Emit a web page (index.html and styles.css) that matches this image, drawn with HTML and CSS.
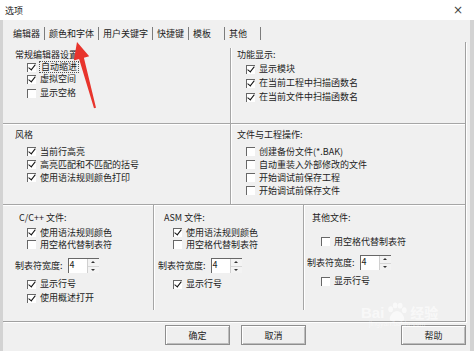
FILE: index.html
```html
<!DOCTYPE html>
<html lang="zh-CN">
<head>
    <meta charset="UTF-8">
    <meta name="viewport" content="width=device-width, initial-scale=1.0">
    <title>选项</title>
    <link rel="stylesheet" href="styles.css">
</head>
<body>
<div class="window">
    <div class="titlebar">
        <span class="title">选项</span>
        <span class="close">×</span>
    </div>

    <div class="dialog">
        <div class="tabs">
            <span class="tab active">编辑器</span>
            <span class="tab">颜色和字体</span>
            <span class="tab">用户关键字</span>
            <span class="tab">快捷键</span>
            <span class="tab wide">模板</span>
            <span class="tab wide">其他</span>
        </div>

        <div class="panel">
            <div class="row row-top">
                <div class="group half">
                    <div class="legend">常规编辑器设置</div>
                    <label class="check"><span class="box on"></span><span class="focus">自动缩进</span></label>
                    <label class="check"><span class="box on"></span>虚拟空间</label>
                    <label class="check"><span class="box"></span>显示空格</label>
                </div>
                <div class="group side">
                    <div class="legend">功能显示:</div>
                    <label class="check"><span class="box on"></span>显示模块</label>
                    <label class="check"><span class="box on"></span>在当前工程中扫描函数名</label>
                    <label class="check"><span class="box on"></span>在当前文件中扫描函数名</label>
                </div>
            </div>

            <div class="row row-mid">
                <div class="group half">
                    <div class="legend">风格</div>
                    <label class="check"><span class="box on"></span>当前行高亮</label>
                    <label class="check"><span class="box on"></span>高亮匹配和不匹配的括号</label>
                    <label class="check"><span class="box on"></span>使用语法规则颜色打印</label>
                </div>
                <div class="group side">
                    <div class="legend">文件与工程操作:</div>
                    <label class="check"><span class="box"></span>创建备份文件(*.BAK)</label>
                    <label class="check"><span class="box"></span>自动重装入外部修改的文件</label>
                    <label class="check"><span class="box"></span>开始调试前保存工程</label>
                    <label class="check"><span class="box"></span>开始调试前保存文件</label>
                </div>
            </div>

            <div class="row row-bottom">
                <div class="group col c-cpp">
                    <div class="legend">C/C++ 文件:</div>
                    <label class="check tight"><span class="box on"></span>使用语法规则颜色</label>
                    <label class="check tight"><span class="box"></span>用空格代替制表符</label>
                    <div class="tabwidth">
                        <span>制表符宽度:</span>
                        <span class="spin"><span class="val">4</span><span class="arrows"><i class="up"></i><i class="down"></i></span></span>
                    </div>
                    <label class="check after"><span class="box on"></span>显示行号</label>
                    <label class="check"><span class="box on"></span>使用概述打开</label>
                </div>
                <div class="group col c-asm">
                    <div class="legend">ASM 文件:</div>
                    <label class="check tight"><span class="box on"></span>使用语法规则颜色</label>
                    <label class="check tight"><span class="box"></span>用空格代替制表符</label>
                    <div class="tabwidth">
                        <span>制表符宽度:</span>
                        <span class="spin"><span class="val">4</span><span class="arrows"><i class="up"></i><i class="down"></i></span></span>
                    </div>
                    <label class="check after"><span class="box on"></span>显示行号</label>
                </div>
                <div class="group col c-other">
                    <div class="legend">其他文件:</div>
                    <label class="check tight skip"><span class="box"></span>用空格代替制表符</label>
                    <div class="tabwidth">
                        <span>制表符宽度:</span>
                        <span class="spin"><span class="val">4</span><span class="arrows"><i class="up"></i><i class="down"></i></span></span>
                    </div>
                    <label class="check after"><span class="box"></span>显示行号</label>
                </div>
            </div>
        </div>

        <div class="buttons">
            <button class="btn ok">确定</button>
            <button class="btn cancel">取消</button>
            <button class="btn help">帮助</button>
        </div>
    </div>

    <div class="watermark">
        <div class="wm-logo">
            <span class="wm-bai">Bai</span>
            <svg class="paw" viewBox="0 0 24 22" width="22" height="20">
                <ellipse cx="5" cy="8" rx="2.6" ry="3.2"/>
                <ellipse cx="10" cy="3.8" rx="2.6" ry="3.2"/>
                <ellipse cx="15.5" cy="4" rx="2.6" ry="3.2"/>
                <ellipse cx="20" cy="9" rx="2.6" ry="3.2"/>
                <path d="M12 10c-4 0-8 5-8 8.5 0 2.5 2.5 3 4 2.6 1.5-.4 2.6-.8 4-.8s2.5.4 4 .8c1.5.4 4-.1 4-2.6C20 15 16 10 12 10z"/>
            </svg>
            <span class="wm-jy">经验</span>
        </div>
        <div class="wm-url">jingyan.baidu.com</div>
    </div>

    <svg class="arrow" viewBox="0 0 474 351" width="474" height="351">
        <polygon points="77,42 89.2,56.3 83.9,57.7 96,107.7 94,108.3 79.1,59.1 73.8,60.5"/>
    </svg>
</div>
</body>
</html>
```

FILE: styles.css
```css
* {
    box-sizing: border-box;
}

body {
    margin: 0;
    width: 474px;
    height: 351px;
    overflow: hidden;
    font-family: "Noto Sans CJK SC", "Noto Sans", sans-serif;
    font-size: 9px;
    color: #222;
    background-color: #f0f0f0;
}

.window {
    position: relative;
    width: 474px;
    height: 351px;
}

.titlebar {
    height: 20px;
    background-color: #fff;
    display: flex;
    align-items: center;
    justify-content: space-between;
    padding: 0 11px 0 5px;
}

.close {
    font-family: "DejaVu Sans", sans-serif;
    font-size: 12px;
    line-height: 1;
    color: #444;
}

.dialog {
    height: 331px;
    border-left: 3px solid #d3d3d3;
    border-right: 4px solid #d3d3d3;
    background-color: #f0f0f0;
}

/* tab strip */
.tabs {
    height: 22px;
    padding: 4px 0 0 6px;
    display: flex;
    align-items: center;
}

.tab {
    height: 13px;
    line-height: 13px;
    padding: 0 4px;
    border-right: 1px solid #7c7c7c;
}

.tab.wide {
    padding-right: 13px;
}

/* options page */
.panel {
    width: 463px;
    height: 280px;
    border-right: 1px solid #a0a0a0;
    border-bottom: 1px solid #a0a0a0;
    box-shadow: 1px 1px 0 #fff;
}

.row {
    display: flex;
    border-bottom: 1px solid #a6a6a6;
    box-shadow: 0 1px 0 #fff;
}

.row-top {
    height: 82px;
    padding-top: 6px;
}

.row-mid {
    height: 81px;
}

.row-bottom {
    height: 116px;
    border-bottom: none;
    box-shadow: none;
    align-items: flex-start;
}

.group.half {
    width: 228px;
    padding-left: 12px;
    border-right: 1px solid #a6a6a6;
    box-shadow: 1px 0 0 #fff;
}

.group.side {
    flex: 1;
    padding-left: 6px;
}

.row-mid .group {
    padding-top: 4px;
}

.legend {
    line-height: 14px;
}

.check {
    display: flex;
    align-items: center;
    gap: 4px;
    line-height: 14px;
    white-space: nowrap;
}

.half .check {
    margin-left: 12px;
}

.side .check {
    margin-left: 9px;
}

.row-mid .legend {
    margin-bottom: 2.5px;
}

.row-mid .check {
    line-height: 13px;
}

.box {
    position: relative;
    flex: none;
    width: 9px;
    height: 9px;
    background-color: #fff;
    border-top: 1px solid #676767;
    border-left: 1px solid #676767;
}

.box.on::after {
    content: "";
    position: absolute;
    left: 2px;
    top: -1px;
    width: 3px;
    height: 6px;
    border: solid #111;
    border-width: 0 1.7px 1.7px 0;
    transform: rotate(38deg);
}

.focus {
    outline: 1px dotted #555;
    line-height: 10px;
    padding: 0 1px;
}

/* file type columns */
.col {
    height: 105px;
    padding-top: 5.5px;
}

.c-cpp {
    width: 151px;
    padding-left: 12px;
    border-right: 1px solid #a6a6a6;
    box-shadow: 1px 0 0 #fff;
}

.c-asm {
    width: 150px;
    padding-left: 4px;
    border-right: 1px solid #a6a6a6;
    box-shadow: 1px 0 0 #fff;
}

.c-other {
    flex: 1;
    padding-left: 3px;
}

.col .legend {
    line-height: 13px;
    margin-bottom: 3px;
}

.c-cpp .legend { margin-left: 4px; }
.c-asm .legend { margin-left: 6px; }
.c-other .legend { margin-left: 5px; }

.c-cpp .check { margin-left: 12px; }
.c-asm .check { margin-left: 15px; }
.c-other .check { margin-left: 14px; }

.check.tight {
    line-height: 12px;
}

.check.skip {
    margin-top: 12px;
}

.check.after {
    margin-top: 4px;
}

.tabwidth {
    display: flex;
    align-items: center;
    gap: 5px;
    height: 15px;
    margin-top: 7.5px;
}

.spin {
    display: flex;
    width: 31px;
    height: 15px;
    background-color: #fff;
    border-top: 1px solid #676767;
    border-left: 1px solid #676767;
}

.spin .val {
    flex: 1;
    padding-left: 1px;
    line-height: 11px;
}

.spin .arrows {
    width: 12px;
    display: flex;
    flex-direction: column;
    border-left: 1px solid #d0d0d0;
    background-color: #f3f3f3;
}

.spin i {
    flex: 1;
    display: flex;
    align-items: center;
    justify-content: center;
}

.spin i + i {
    border-top: 1px solid #d6d6d6;
}

.spin i::before {
    content: "";
    border-left: 2px solid transparent;
    border-right: 2px solid transparent;
}

.spin .up::before {
    border-bottom: 2px solid #333;
}

.spin .down::before {
    border-top: 2px solid #333;
}

/* dialog buttons */
.buttons {
    display: flex;
    width: 463px;
    padding-top: 3px;
}

.btn {
    width: 65px;
    height: 20px;
    padding: 0;
    font-family: inherit;
    font-size: 9px;
    color: #222;
    background-color: #efefef;
    border: 1px solid #8e8e8e;
    box-shadow: inset 1px 1px 0 #fff, inset -1px -1px 0 #bdbdbd;
}

.btn.ok {
    margin-left: 162px;
}

.btn.cancel {
    margin-left: 11px;
}

.btn.help {
    margin-left: auto;
}

/* overlays */
.watermark {
    position: absolute;
    left: 361px;
    top: 302px;
    color: rgba(255, 255, 255, 0.6);
    pointer-events: none;
}

.wm-logo {
    display: flex;
    align-items: center;
    gap: 2px;
}

.wm-bai {
    font-family: "Liberation Sans", sans-serif;
    font-weight: bold;
    font-size: 15px;
}

.paw {
    fill: rgba(255, 255, 255, 0.6);
}

.wm-jy {
    font-size: 14px;
    font-weight: bold;
}

.wm-url {
    font-family: "Liberation Sans", sans-serif;
    font-size: 7px;
    margin: -2px 0 0 8px;
    color: rgba(255, 255, 255, 0.45);
}

.arrow {
    position: absolute;
    left: 0;
    top: 0;
    pointer-events: none;
    fill: #e8342c;
}
```
